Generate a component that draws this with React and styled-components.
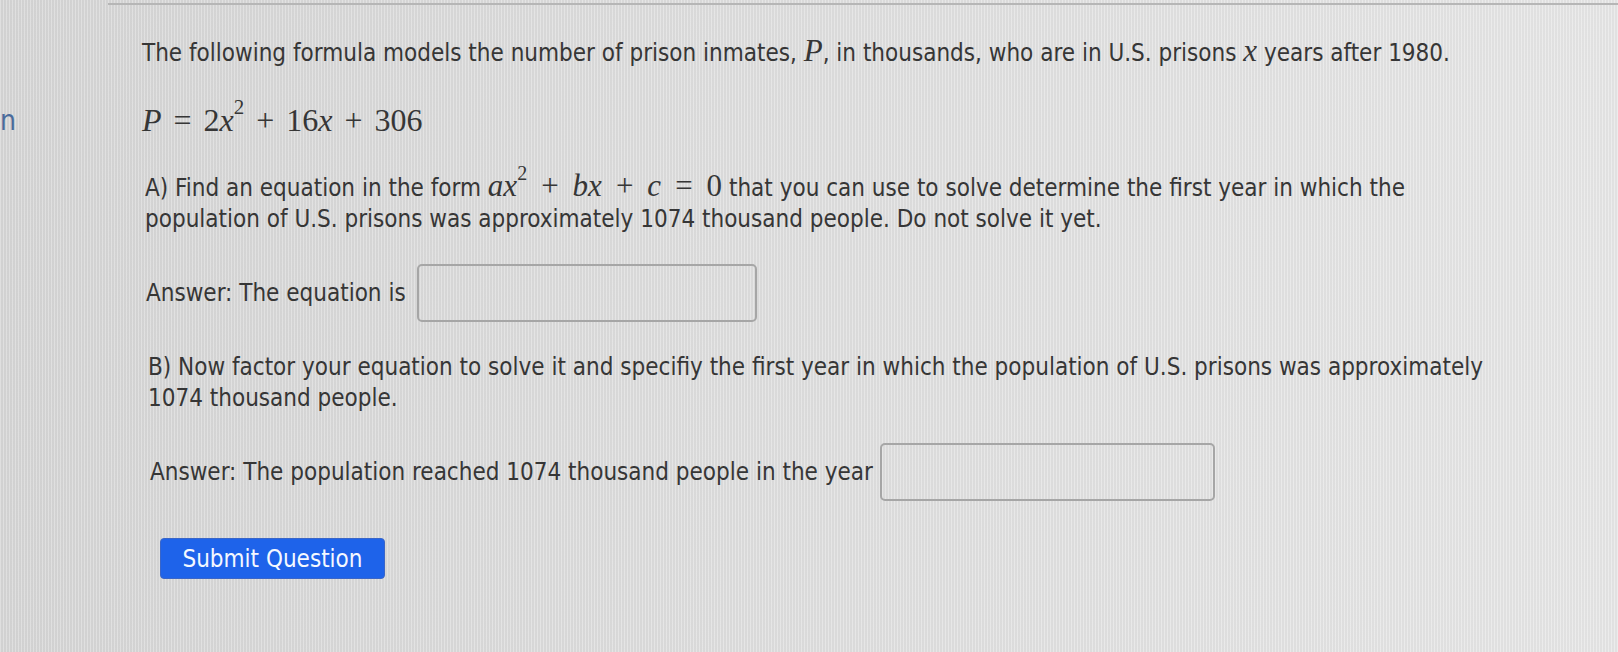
import React from 'react'
import styled, { createGlobalStyle } from 'styled-components'

const GlobalStyle = createGlobalStyle`
  html, body {
    margin: 0;
    padding: 0;
  }
  body {
    width: 1618px;
    height: 652px;
    overflow: hidden;
    background-color: #dedede;
    background-image:
      repeating-linear-gradient(90deg, rgba(255,255,255,0.18) 0 1px, rgba(0,0,0,0.03) 1px 3px),
      linear-gradient(90deg, #d8d8d8 0%, #e0e0e0 45%, #e8e8e8 100%);
    font-family: "DejaVu Sans Condensed", "DejaVu Sans", sans-serif;
    color: #363636;
  }
`

const Page = styled.div`
  display: flex;
  height: 652px;
`

const Sidebar = styled.div`
  width: 108px;
  flex-shrink: 0;
  padding-top: 101px;
`

const SideText = styled.span`
  display: block;
  font-size: 28px;
  line-height: 40px;
  color: #4a6c9c;
`

const Main = styled.div`
  flex: 1;
  border-top: 2px solid #b6b6b6;
  margin-top: 3px;
  padding: 33px 0 0 34px;
  display: flex;
  flex-direction: column;
`

const Para = styled.p`
  margin: ${p => p.$top || 0}px 0 0 ${p => p.$indent || 0}px;
  font-size: 24px;
  line-height: ${p => p.$lh || 31}px;
  max-width: 1360px;
`

const M = styled.span`
  font-family: "Liberation Serif", "DejaVu Serif", serif;
  font-style: ${p => (p.$upright ? 'normal' : 'italic')};
  font-size: ${p => p.$size || 31}px;
  line-height: 0;
`

const Op = styled.span`
  font-family: "Liberation Serif", "DejaVu Serif", serif;
  font-size: ${p => p.$size || 31}px;
  line-height: 0;
  margin: 0 ${p => p.$gap || 14}px;
`

const Sup = styled.sup`
  font-family: "Liberation Serif", serif;
  font-size: ${p => p.$size || 20}px;
  line-height: 0;
  margin-left: 0;
  vertical-align: 0.8em;
`

const AnswerRow = styled.div`
  display: flex;
  align-items: center;
  margin: ${p => p.$top}px 0 0 ${p => p.$indent || 0}px;
  font-size: 24px;
`

const AnswerBox = styled.div`
  width: ${p => p.$width}px;
  height: 58px;
  margin-left: ${p => p.$gap || 7}px;
  border: 2px solid #a6a6a6;
  border-radius: 5px;
  box-sizing: border-box;
`

const SubmitButton = styled.button`
  align-self: flex-start;
  margin: 37px 0 0 18px;
  width: 225px;
  height: 41px;
  border: 1px solid #3a66c8;
  border-radius: 4px;
  background: #1e63ea;
  color: #f4f8ff;
  font-family: "DejaVu Sans Condensed", "DejaVu Sans", sans-serif;
  font-size: 24px;
  padding: 0;
`

export default function App() {
  return (
    <>
      <GlobalStyle />
      <Page>
        <Sidebar>
          <SideText>n</SideText>
        </Sidebar>
        <Main>
          <Para>
            The following formula models the number of prison inmates, <M>P</M>, in thousands, who are in U.S.
            prisons <M>x</M> years after 1980.
          </Para>
          <Para $top={34} $lh={40}>
            <M $size={32}>P</M>
            <Op $size={32} $gap={12}>=</Op>
            <M $size={32} $upright>2</M>
            <M $size={32}>x</M>
            <Sup $size={21}>2</Sup>
            <Op $size={32} $gap={12}>+</Op>
            <M $size={32} $upright>16</M>
            <M $size={32}>x</M>
            <Op $size={32} $gap={12}>+</Op>
            <M $size={32} $upright>306</M>
          </Para>
          <Para $top={30} $indent={3}>
            A) Find an equation in the form <M>ax</M><Sup>2</Sup><Op>+</Op><M>bx</M><Op>+</Op><M>c</M><Op>=</Op>
            <M $upright>0</M> that you can use to solve determine the first year in which the population of U.S.
            prisons was approximately 1074 thousand people. Do not solve it yet.
          </Para>
          <AnswerRow $top={29} $indent={4}>
            Answer: The equation is
            <AnswerBox $width={340} $gap={11} />
          </AnswerRow>
          <Para $top={30} $indent={6}>
            B) Now factor your equation to solve it and specifiy the first year in which the population of U.S.
            prisons was approximately 1074 thousand people.
          </Para>
          <AnswerRow $top={29} $indent={8}>
            Answer: The population reached 1074 thousand people in the year
            <AnswerBox $width={335} $gap={7} />
          </AnswerRow>
          <SubmitButton type="button">Submit Question</SubmitButton>
        </Main>
      </Page>
    </>
  )
}
